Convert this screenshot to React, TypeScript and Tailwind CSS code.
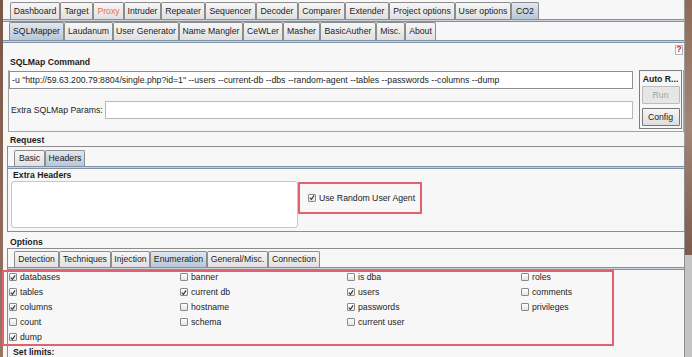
import type { ReactNode } from "react";

type Tab = { label: string; w: string; active?: boolean; alert?: boolean };

const TOP_TABS: Tab[] = [
  { label: "Dashboard", w: "w-[50px]" },
  { label: "Target", w: "w-[33px]" },
  { label: "Proxy", w: "w-[31px]", alert: true },
  { label: "Intruder", w: "w-[37px]" },
  { label: "Repeater", w: "w-[44px]" },
  { label: "Sequencer", w: "w-[51px]" },
  { label: "Decoder", w: "w-[42px]" },
  { label: "Comparer", w: "w-[47px]" },
  { label: "Extender", w: "w-[44px]" },
  { label: "Project options", w: "w-[66px]" },
  { label: "User options", w: "w-[56px]" },
  { label: "CO2", w: "w-[28px]", active: true },
];

const SUB_TABS: Tab[] = [
  { label: "SQLMapper", w: "w-[55px]", active: true },
  { label: "Laudanum", w: "w-[49px]" },
  { label: "User Generator", w: "w-[66px]" },
  { label: "Name Mangler", w: "w-[64px]" },
  { label: "CeWLer", w: "w-[40px]" },
  { label: "Masher", w: "w-[37px]" },
  { label: "BasicAuther", w: "w-[56px]" },
  { label: "Misc.", w: "w-[29px]" },
  { label: "About", w: "w-[31px]" },
];

const REQUEST_TABS: Tab[] = [
  { label: "Basic", w: "w-[31px]" },
  { label: "Headers", w: "w-[40px]", active: true },
];

const OPTION_TABS: Tab[] = [
  { label: "Detection", w: "w-[45px]" },
  { label: "Techniques", w: "w-[52px]" },
  { label: "Injection", w: "w-[39px]" },
  { label: "Enumeration", w: "w-[57px]", active: true },
  { label: "General/Misc.", w: "w-[61px]" },
  { label: "Connection", w: "w-[52px]" },
];

// row-major, 4 columns; null = empty cell
const ENUM_OPTIONS: ([string, boolean] | null)[] = [
  ["databases", true], ["banner", false], ["is dba", false], ["roles", false],
  ["tables", true], ["current db", true], ["users", true], ["comments", false],
  ["columns", true], ["hostname", false], ["passwords", true], ["privileges", false],
  ["count", false], ["schema", false], ["current user", false], null,
  ["dump", true], null, null, null,
];

const CMD =
  '-u "http://59.63.200.79:8804/single.php?id=1" --users --current-db --dbs --random-agent --tables --passwords --columns --dump';

function TabStrip(props: { tabs: Tab[]; h: string; pad: string }) {
  return (
    <div className={`flex items-end ${props.h} ${props.pad}`}>
      {props.tabs.map((t) => (
        <div
          key={t.label}
          className={`${t.w} h-full flex items-center justify-center whitespace-nowrap border border-b-0 border-[#8d8d8d] rounded-t-[2px] ${
            t.active ? "bg-gradient-to-b from-[#dfe7ef] to-[#b8c7d6]" : "bg-gradient-to-b from-[#f6f6f6] to-[#e0e0e0]"
          } ${t.alert ? "text-[#f26b3a]" : "text-[#1c1c1c]"}`}
        >
          {t.label}
        </div>
      ))}
    </div>
  );
}

function DoubleLine() {
  return <div className="h-[3px] border-y border-[#7f91a5] bg-[#c9d3dd]" />;
}

function Check(props: { on: boolean }) {
  return (
    <span className="w-[8px] h-[8px] shrink-0 rounded-[1px] border border-[#8a8a8a] bg-gradient-to-b from-white to-[#e4e4e4] flex items-center justify-center">
      {props.on ? (
        <svg width="7" height="7" viewBox="0 0 7 7">
          <path d="M1 3.6 L2.8 5.6 L6 1" fill="none" stroke="#2d3540" strokeWidth="1.3" />
        </svg>
      ) : null}
    </span>
  );
}

function CheckItem(props: { label: string; on: boolean }) {
  return (
    <div className="flex items-center gap-[3px] h-[15px]">
      <Check on={props.on} />
      <span>{props.label}</span>
    </div>
  );
}

function Heading(props: { children: ReactNode; cls: string }) {
  return <div className={`h-[10px] leading-[10px] font-bold ${props.cls}`}>{props.children}</div>;
}

export default function App() {
  return (
    <div
      className="relative flex w-[692px] h-[357px] overflow-hidden bg-[#8b6a58] text-[8.7px] leading-none text-[#1c1c1c]"
      style={{ fontFamily: '"Liberation Sans", Arial, sans-serif' }}
    >
      <div className="w-[3px] shrink-0 bg-gradient-to-b from-[#7a5646] to-[#9a7564]" />
      <div className="w-[682px] shrink-0 bg-[#f7f7f7] border-r border-[#9c9c9c] flex flex-col">
        <div className="h-[2px]" />
        <TabStrip tabs={TOP_TABS} h="h-[17px]" pad="pl-[7px]" />
        <DoubleLine />
        <TabStrip tabs={SUB_TABS} h="h-[18px]" pad="pl-[6px]" />
        <DoubleLine />

        <div className="flex justify-end pr-[1px] mt-[2px] h-[11px]">
          <div className="w-[8px] h-[10px] border border-[#b4b4b4] bg-white flex items-center justify-center text-[#d42020] font-bold text-[9px]">
            ?
          </div>
        </div>

        <Heading cls="mt-[2px] ml-[7px]">SQLMap Command</Heading>

        <div className="mt-[3px] ml-[5px] w-[676px] h-[62px] border border-t-0 border-[#a4a4a4] flex">
          <div className="w-[624px] flex flex-col">
            <div className="mt-[1px] h-[18px] border border-[#8f8f8f] bg-white flex items-center pl-[2px] whitespace-nowrap overflow-hidden">
              {CMD}
            </div>
            <div className="mt-[12px] flex items-center">
              <span className="w-[96px] pl-[2px] whitespace-nowrap">Extra SQLMap Params:</span>
              <div className="flex-1 h-[18px] border border-[#b8b8b8] bg-white" />
            </div>
          </div>
          <div className="ml-[6px] w-[43px] h-[59px] border border-[#7e7e7e] flex flex-col items-center">
            <div className="mt-[3px] h-[10px] leading-[10px] font-bold whitespace-nowrap">Auto R...</div>
            <div className="mt-[2px] w-[38px] h-[18px] border border-[#bcbcbc] bg-[#e6e6e6] text-[#a3a3a3] flex items-center justify-center rounded-[1px]">
              Run
            </div>
            <div className="mt-[4px] w-[38px] h-[18px] border border-[#777] bg-gradient-to-b from-[#f6f6f6] to-[#dedede] flex items-center justify-center rounded-[1px]">
              Config
            </div>
          </div>
        </div>

        <Heading cls="mt-[3px] ml-[7px]">Request</Heading>
        <div className="mt-[1px] ml-[4px] w-[678px] h-[87px] border border-[#8c8c8c] flex flex-col">
          <div className="h-[3px]" />
          <TabStrip tabs={REQUEST_TABS} h="h-[16px]" pad="pl-[6px]" />
          <DoubleLine />
          <Heading cls="mt-[1px] ml-[5px]">Extra Headers</Heading>
          <div className="mt-[1px] flex">
            <div className="ml-[3px] w-[287px] h-[47px] rounded-[3px] border border-[#c6c6c6] bg-white" />
            <div className="ml-[10px] mt-[13px] flex items-start gap-[3px] h-[10px]">
              <Check on />
              <span>Use Random User Agent</span>
            </div>
          </div>
        </div>

        <Heading cls="mt-[5px] ml-[7px]">Options</Heading>
        <div className="mt-[1px] ml-[4px] w-[678px] flex-1 border border-b-0 border-[#8c8c8c] flex flex-col">
          <div className="h-[2px]" />
          <TabStrip tabs={OPTION_TABS} h="h-[16px]" pad="pl-[6px]" />
          <DoubleLine />
          <div className="grid grid-cols-[171px_167px_174px_120px] pl-[1px]">
            {ENUM_OPTIONS.map((o, i) =>
              o ? <CheckItem key={o[0]} label={o[0]} on={o[1]} /> : <div key={`e${i}`} className="h-[15px]" />
            )}
          </div>
          <Heading cls="mt-[2px] ml-[5px]">Set limits:</Heading>
        </div>
      </div>
      <div className="flex-1 flex flex-col">
        <div className="h-[255px] bg-gradient-to-b from-[#8e6b5a] via-[#a48676] to-[#7c5b4b]" />
        <div className="flex-1 bg-[#c4c4c4]" />
      </div>

      {/* annotation boxes */}
      <div className="absolute left-[298px] top-[182px] w-[124px] h-[32px] border-2 border-[#e2616e]" />
      <div className="absolute left-[2px] top-[270px] w-[612px] h-[76px] border-2 border-[#e2616e]" />
    </div>
  );
}
